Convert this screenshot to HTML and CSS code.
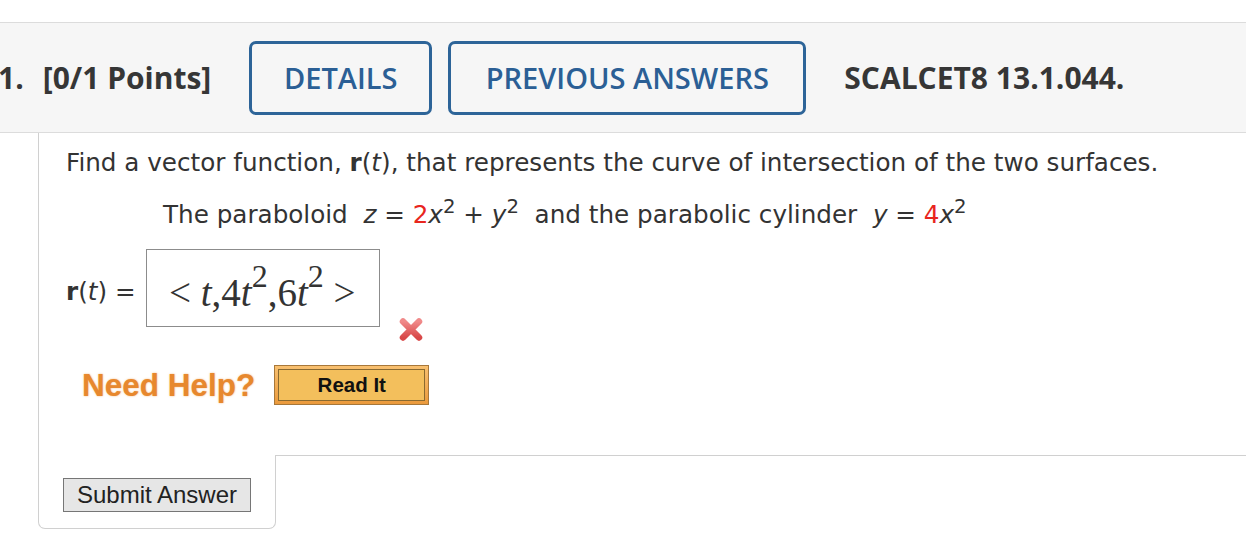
FILE: index.html
```html
<!DOCTYPE html>
<html>
<head>
<meta charset="utf-8">
<link rel="stylesheet" href="styles.css">
</head>
<body>
<div class="top"></div>
<header class="qhead">
  <span class="qtitle"><span class="qnum">1.</span>[0/1 Points]</span>
  <button class="hbtn details">DETAILS</button>
  <button class="hbtn prev">PREVIOUS ANSWERS</button>
  <span class="qid">SCALCET8 13.1.044.</span>
</header>
<section class="qbody">
  <div class="panel">
    <p class="prompt">Find a vector function, <b>r</b>(<i>t</i>), that represents the curve of intersection of the two surfaces.</p>
    <p class="surfaces">The paraboloid&nbsp; <i>z</i> = <span class="red">2</span><i>x</i><sup>2</sup> + <i>y</i><sup>2</sup>&nbsp; and the parabolic cylinder&nbsp; <i>y</i> = <span class="red">4</span><i>x</i><sup>2</sup></p>
    <div class="answer-row">
      <span class="rlabel"><b>r</b>(<i>t</i>) =</span>
      <div class="answer-box"><span class="math">&lt; <i>t</i>,4<i>t</i><sup>2</sup>,6<i>t</i><sup>2</sup> &gt;</span></div>
      <svg class="xmark" width="26" height="25" viewBox="0 0 26 25">
        <defs>
          <linearGradient id="xg" x1="0" y1="0" x2="0" y2="1">
            <stop offset="0" stop-color="#f08a8a"/>
            <stop offset="1" stop-color="#d84848"/>
          </linearGradient>
        </defs>
        <path d="M5 4.5 L21 20.5 M21 4.5 L5 20.5" stroke="url(#xg)" stroke-width="6.5" stroke-linecap="round"/>
      </svg>
    </div>
    <div class="help-row">
      <span class="needhelp">Need Help?</span>
      <button class="readit"><span>Read It</span></button>
    </div>
  </div>
  <div class="footer">
    <div class="submit-tab"><button class="submit">Submit Answer</button></div>
    <div class="filler"></div>
  </div>
</section>
</body>
</html>
```

FILE: styles.css
```css
* { box-sizing: border-box; }
html, body { margin: 0; padding: 0; background: #fff; }
body { width: 1246px; height: 547px; overflow: hidden; }

.top { height: 22px; }

.qhead {
  display: flex;
  align-items: center;
  height: 111px;
  background: #f6f6f6;
  border-top: 1px solid #dcdcdc;
  border-bottom: 1px solid #dcdcdc;
  font-family: "Open Sans", sans-serif;
  color: #363636;
}
.qtitle {
  font-weight: 700;
  font-size: 30px;
  margin-left: -2px;
  white-space: nowrap;
}
.qnum { margin-right: 19px; }
.hbtn {
  font-family: "Open Sans", sans-serif;
  font-size: 29px;
  font-weight: 600;
  color: #2b5f95;
  background: transparent;
  border: 3px solid #2d6498;
  border-radius: 7px;
  height: 74px;
  padding: 0;
  margin: 0;
}
.details { width: 183px; margin-left: 38px; }
.prev { width: 358px; margin-left: 16px; }
.qid {
  font-weight: 700;
  font-size: 30px;
  margin-left: 38px;
  white-space: nowrap;
}

.qbody { margin-left: 38px; }
.panel {
  border-left: 1px solid #d0d0d0;
  padding: 15px 0 0 27px;
  height: 322px;
  font-family: "DejaVu Sans", Verdana, sans-serif;
  color: #333;
  font-size: 24.65px;
}
.panel p { margin: 0; white-space: nowrap; }
.prompt { line-height: 30px; }
.surfaces { margin: 22px 0 0 97px !important; line-height: 30px; }
.red { color: #e8261e; }
sup { font-size: 0.8em; line-height: 0; vertical-align: 0.5em; }

.answer-row {
  display: flex;
  align-items: flex-start;
  margin-top: 19px;
}
.rlabel { margin-top: 28px; width: 80px; white-space: nowrap; }
.answer-box {
  width: 234px;
  height: 78px;
  border: 1px solid #8c8c8c;
  display: flex;
  align-items: center;
  padding: 8px 0 0 22px;
}
.math {
  font-family: "Liberation Serif", "Times New Roman", serif;
  font-size: 39px;
  color: #333;
  white-space: nowrap;
}
.math sup { font-size: 0.82em; vertical-align: 0.6em; }
.xmark { margin: 68px 0 0 18px; }

.help-row {
  display: flex;
  align-items: center;
  margin-top: 23px;
  margin-left: 16px;
}
.needhelp {
  font-family: "Liberation Sans", Arial, sans-serif;
  font-weight: 700;
  font-size: 31.5px;
  color: #e7882e;
  text-shadow: 0 0 2px rgba(240, 150, 60, 0.7);
}
.readit {
  margin-left: 19px;
  width: 155px;
  height: 40px;
  padding: 3px;
  background: linear-gradient(#f8c070, #eb9a3c);
  border: 1px solid #a8783a;
  border-radius: 0;
}
.readit span {
  display: flex;
  align-items: center;
  justify-content: center;
  height: 100%;
  background: #f3bf5c;
  border: 1px solid #8a6a30;
  font-family: "Liberation Sans", Arial, sans-serif;
  font-weight: 700;
  font-size: 20.5px;
  color: #111;
}

.footer { display: flex; }
.submit-tab {
  width: 238px;
  height: 74px;
  border-left: 1px solid #d0d0d0;
  border-right: 1px solid #d0d0d0;
  border-bottom: 1px solid #d0d0d0;
  border-radius: 0 0 7px 7px;
  padding: 23px 0 0 24px;
}
.filler { flex: 1; border-top: 1px solid #d0d0d0; }
.submit {
  width: 188px;
  height: 34px;
  background: #e6e6e6;
  border: 1px solid #767676;
  border-radius: 0;
  font-family: "Liberation Sans", Arial, sans-serif;
  font-size: 24px;
  color: #222;
  padding: 0;
}
```
